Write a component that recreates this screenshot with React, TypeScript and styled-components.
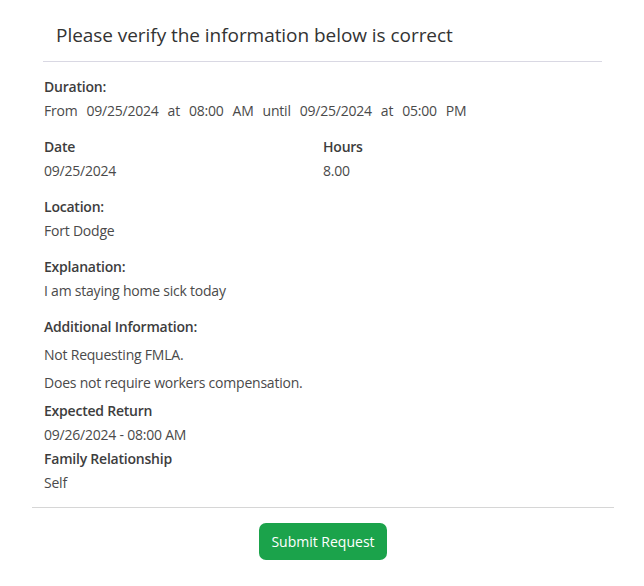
import styled, { createGlobalStyle } from "styled-components";

const GlobalStyle = createGlobalStyle`
  body {
    margin: 0;
    background: #fff;
    font-family: "Open Sans", "Liberation Sans", sans-serif;
    color: #444;
  }
`;

const Modal = styled.div`
  width: 644px;
  padding-top: 14px;
`;

const Header = styled.div`
  margin: 0 42px 0 43px;
  padding: 8px 0 13px 13px;
  border-bottom: 1px solid #d9d8e3;
`;

const Title = styled.h2`
  margin: 0;
  font-size: 19px;
  font-weight: 400;
  color: #333;
  letter-spacing: -0.05px;
`;

const Body = styled.div`
  padding: 13px 44px 12px 44px;
  font-size: 14px;
  line-height: 24px;
  letter-spacing: -0.22px;
`;

const Section = styled.div<{ $gap?: number }>`
  margin-bottom: ${(p) => p.$gap ?? 12}px;
`;

const Label = styled.div<{ $top?: number }>`
  font-weight: 600;
  color: #3d3d3d;
  margin-top: ${(p) => p.$top ?? 0}px;
`;

const Value = styled.div<{ $spaced?: boolean }>`
  color: #4a4a4a;
  word-spacing: ${(p) => (p.$spaced ? "5.6px" : "normal")};
`;

const Line = styled.div`
  color: #4a4a4a;
  margin-top: 4px;
`;

const Columns = styled.div`
  display: grid;
  grid-template-columns: 279px 1fr;
`;

const Footer = styled.div`
  margin: 0 30px 0 32px;
  border-top: 1px solid #d6d6d6;
  padding: 15px 0 20px;
  display: flex;
  justify-content: center;
`;

const SubmitButton = styled.button`
  background: #1ba34b;
  color: #fff;
  border: none;
  border-radius: 7px;
  height: 37px;
  padding: 0 12px;
  font-family: "Open Sans", "Liberation Sans", sans-serif;
  font-size: 14px;
  font-weight: 500;
  cursor: pointer;
`;

export default function App() {
  return (
    <>
      <GlobalStyle />
      <Modal>
        <Header>
          <Title>Please verify the information below is correct</Title>
        </Header>
        <Body>
          <Section>
            <Label>Duration:</Label>
            <Value $spaced>
              From 09/25/2024 at 08:00 AM until 09/25/2024 at 05:00 PM
            </Value>
          </Section>
          <Section>
            <Columns>
              <div>
                <Label>Date</Label>
                <Value>09/25/2024</Value>
              </div>
              <div>
                <Label>Hours</Label>
                <Value>8.00</Value>
              </div>
            </Columns>
          </Section>
          <Section>
            <Label>Location:</Label>
            <Value>Fort Dodge</Value>
          </Section>
          <Section>
            <Label>Explanation:</Label>
            <Value>I am staying home sick today</Value>
          </Section>
          <Section $gap={0}>
            <Label>Additional Information:</Label>
            <Line>Not Requesting FMLA.</Line>
            <Line>Does not require workers compensation.</Line>
            <Label $top={4}>Expected Return</Label>
            <Value>09/26/2024 - 08:00 AM</Value>
            <Label>Family Relationship</Label>
            <Value>Self</Value>
          </Section>
        </Body>
        <Footer>
          <SubmitButton>Submit Request</SubmitButton>
        </Footer>
      </Modal>
    </>
  );
}
